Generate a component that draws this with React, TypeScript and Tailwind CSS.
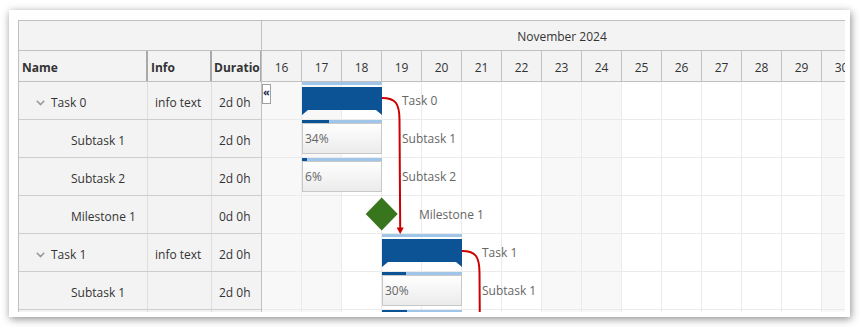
import React from "react";

type Row = { name: string; parent?: boolean; info?: string; dur: string };

const rows: Row[] = [
  { name: "Task 0", parent: true, info: "info text", dur: "2d 0h" },
  { name: "Subtask 1", dur: "2d 0h" },
  { name: "Subtask 2", dur: "2d 0h" },
  { name: "Milestone 1", dur: "0d 0h" },
  { name: "Task 1", parent: true, info: "info text", dur: "2d 0h" },
  { name: "Subtask 1", dur: "2d 0h" },
  { name: "Subtask 2", dur: "2d 0h" },
];

const days = [16, 17, 18, 19, 20, 21, 22, 23, 24, 25, 26, 27, 28, 29, 30];
const weekend = new Set([16, 17, 23, 24, 30]);

const DARK = "#0b5394";
const LIGHT = "#9fc5e8";

function Chevron() {
  return (
    <svg width="9" height="6" viewBox="0 0 9 6" className="shrink-0">
      <path d="M0.8 0.8 L4.5 4.6 L8.2 0.8" fill="none" stroke="#9a9a9a" strokeWidth="1.6" />
    </svg>
  );
}

function LeftGrid() {
  return (
    <div className="w-[244px] shrink-0 border-l border-r border-[#c0c0c0] bg-[#f3f3f3]">
      <div className="h-[30px] border-b border-[#c0c0c0]" />
      <div className="flex h-[31px] border-b border-[#c0c0c0] font-bold text-[#333]">
        <div className="w-[129px] shrink-0 border-r-2 border-[#a9a9a9] pl-[3px] pt-[4px] flex items-center">Name</div>
        <div className="w-[64px] shrink-0 border-r-2 border-[#a9a9a9] pl-[3px] pt-[4px] flex items-center">Info</div>
        <div className="w-[49px] shrink-0 border-r border-[#a9a9a9] pl-[2px] pt-[4px] flex items-center overflow-hidden whitespace-nowrap">
          Duration
        </div>
      </div>
      {rows.map((r, i) => (
        <div key={i} className="flex h-[38px] border-b border-[#cdcdcd]">
          <div
            className={`w-[129px] shrink-0 border-r border-[#dedede] pt-[4px] flex items-center whitespace-nowrap ${
              r.parent ? "pl-[17px] gap-[6px]" : "pl-[52px]"
            }`}
          >
            {r.parent && <Chevron />}
            <span>{r.name}</span>
          </div>
          <div className="w-[64px] shrink-0 border-r border-[#dedede] pl-[7px] pt-[4px] flex items-center whitespace-nowrap">
            {r.info ?? ""}
          </div>
          <div className="w-[49px] shrink-0 pl-[7px] pt-[4px] flex items-center whitespace-nowrap">{r.dur}</div>
        </div>
      ))}
    </div>
  );
}

function ParentBar({ left, top }: { left: number; top: number }) {
  return (
    <svg width="80" height="33" className="absolute" style={{ left, top }}>
      <rect x="0" y="0" width="80" height="3" fill={LIGHT} />
      <polygon points="0,5 80,5 80,33 74,28 6,28 0,33" fill={DARK} />
    </svg>
  );
}

function TaskBar({ left, top, pct }: { left: number; top: number; pct: number }) {
  return (
    <div className="absolute w-[80px] h-[34px]" style={{ left, top }}>
      <div className="flex h-[3px]">
        <div className="bg-[#0b5394]" style={{ width: `${pct}%` }} />
        <div className="flex-1 bg-[#9fc5e8]" />
      </div>
      <div className="h-[31px] border border-[#c8c8c8] bg-gradient-to-b from-white to-[#ebebeb] pl-[2px] pt-[1px] flex items-center text-[#666]">
        {pct}%
      </div>
    </div>
  );
}

function Label({ left, top, text }: { left: number; top: number; text: string }) {
  return (
    <div className="absolute h-[37px] pt-[1px] flex items-center whitespace-nowrap text-[#666]" style={{ left, top }}>
      {text}
    </div>
  );
}

function Timeline() {
  return (
    <div className="relative flex-1 overflow-hidden">
      <div className="w-[600px]">
        <div className="h-[30px] border-b border-[#c0c0c0] bg-[#f3f3f3] pt-[2px] flex items-center justify-center text-[#333]">
          November 2024
        </div>
        <div className="flex h-[31px] border-b border-[#c0c0c0] bg-[#f3f3f3] text-[#333]">
          {days.map((d) => (
            <div key={d} className="w-[40px] shrink-0 border-r border-[#c0c0c0] pt-[3px] flex items-center justify-center">
              {d}
            </div>
          ))}
        </div>
        <div className="relative">
          {rows.map((_, i) => (
            <div key={i} className="flex h-[38px] border-b border-[#ebebeb]">
              {days.map((d) => (
                <div
                  key={d}
                  className={`w-[40px] shrink-0 border-r border-[#ebebeb] ${weekend.has(d) ? "bg-[#f8f8f8]" : "bg-white"}`}
                />
              ))}
            </div>
          ))}

          <ParentBar left={40} top={0} />
          <Label left={140} top={0} text="Task 0" />
          <TaskBar left={40} top={38} pct={34} />
          <Label left={140} top={38} text="Subtask 1" />
          <TaskBar left={40} top={76} pct={6} />
          <Label left={140} top={76} text="Subtask 2" />
          <Label left={157} top={114} text="Milestone 1" />
          <ParentBar left={120} top={152} />
          <Label left={220} top={152} text="Task 1" />
          <TaskBar left={120} top={190} pct={30} />
          <Label left={220} top={190} text="Subtask 1" />
          <TaskBar left={120} top={228} pct={31} />

          <svg width="600" height="266" className="absolute left-0 top-0 overflow-visible pointer-events-none">
            <polygon points="119.7,115.5 135.7,132 119.7,148.5 103.7,132" fill="#38761d" />
            <path d="M120 16 C134 16 137.5 22 137.5 38 L138.2 146" fill="none" stroke="#cc0000" strokeWidth="2" />
            <polygon points="134.6,145.5 141.8,145.5 138.2,152" fill="#cc0000" />
            <path d="M200 169 C214 169 217.5 175 217.5 191 L218 266" fill="none" stroke="#cc0000" strokeWidth="2" />
          </svg>

          <div className="absolute left-0 top-[2px] w-[9px] h-[20px] border border-[#a0a0a0] bg-white text-[11px] font-bold leading-[13px] text-[#1c2a5a] pl-[0px]">
            «
          </div>
        </div>
      </div>
    </div>
  );
}

export default function App() {
  return (
    <div className="w-[860px] h-[327px] bg-white pt-[10px] pl-[9px] font-['Open_Sans','Noto_Sans',sans-serif] text-[12px] text-[#333]">
      <div className="w-[841px] h-[307px] bg-white shadow-[1px_2px_8px_rgba(0,0,0,0.45)] pt-[10px] pl-[9px] pr-[5px] pb-[5px]">
        <div className="flex h-[292px] w-[827px] overflow-hidden border-t border-[#c0c0c0]">
          <LeftGrid />
          <Timeline />
        </div>
      </div>
    </div>
  );
}
